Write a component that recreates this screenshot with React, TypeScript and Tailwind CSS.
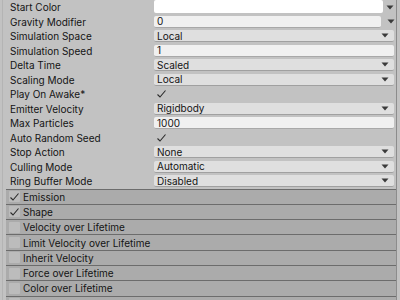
import React from 'react';

type Prop =
  | { label: string; kind: 'color' }
  | { label: string; kind: 'curve'; value: string }
  | { label: string; kind: 'select'; value: string }
  | { label: string; kind: 'text'; value: string }
  | { label: string; kind: 'toggle' };

const props: Prop[] = [
  { label: 'Start Color', kind: 'color' },
  { label: 'Gravity Modifier', kind: 'curve', value: '0' },
  { label: 'Simulation Space', kind: 'select', value: 'Local' },
  { label: 'Simulation Speed', kind: 'text', value: '1' },
  { label: 'Delta Time', kind: 'select', value: 'Scaled' },
  { label: 'Scaling Mode', kind: 'select', value: 'Local' },
  { label: 'Play On Awake*', kind: 'toggle' },
  { label: 'Emitter Velocity', kind: 'select', value: 'Rigidbody' },
  { label: 'Max Particles', kind: 'text', value: '1000' },
  { label: 'Auto Random Seed', kind: 'toggle' },
  { label: 'Stop Action', kind: 'select', value: 'None' },
  { label: 'Culling Mode', kind: 'select', value: 'Automatic' },
  { label: 'Ring Buffer Mode', kind: 'select', value: 'Disabled' },
];

// last row is only peeking in at the bottom edge
const modules = [
  { name: 'Emission', on: true },
  { name: 'Shape', on: true },
  { name: 'Velocity over Lifetime', on: false },
  { name: 'Limit Velocity over Lifetime', on: false },
  { name: 'Inherit Velocity', on: false },
  { name: 'Force over Lifetime', on: false },
  { name: 'Color over Lifetime', on: false },
  { name: '', on: false },
];

const Arrow = () => (
  <svg width="8" height="5" viewBox="0 0 8 5" className="shrink-0">
    <path d="M0.5 0.5 H7.5 L4 4.5 Z" fill="#3a3a3a" />
  </svg>
);

const Check = () => (
  <svg width="11" height="10" viewBox="0 0 11 10">
    <path d="M1.5 5.5 L4 8 L9.5 1.5" fill="none" stroke="#2a2a2a" strokeWidth="1.1" />
  </svg>
);

const Value = ({ p }: { p: Prop }) => {
  if (p.kind === 'color') {
    return (
      <div className="flex h-full items-center gap-[3px]">
        <div className="h-[13px] w-[229px] self-start rounded-[2px] bg-white" />
        <Arrow />
      </div>
    );
  }
  if (p.kind === 'curve') {
    return (
      <div className="flex h-full items-center gap-[6px]">
        <div className="flex h-[12px] w-[227px] items-center rounded-[2px] border-b border-[#a8a8a8] bg-[#f0f0f0] pl-[3px]">
          {p.value}
        </div>
        <Arrow />
      </div>
    );
  }
  if (p.kind === 'select') {
    return (
      <div className="flex h-full items-center">
        <div className="flex h-[12px] w-[240px] items-center justify-between rounded-[2px] border-b border-[#a0a0a0] bg-[#dfdfdf] pl-[3px] pr-[5px]">
          <span>{p.value}</span>
          <Arrow />
        </div>
      </div>
    );
  }
  if (p.kind === 'text') {
    return (
      <div className="flex h-full items-center">
        <div className="flex h-[12px] w-[240px] items-center rounded-[2px] border-b border-[#a8a8a8] bg-[#f0f0f0] pl-[3px]">
          {p.value}
        </div>
      </div>
    );
  }
  return (
    <div className="flex h-full items-center pl-[2px]">
      <Check />
    </div>
  );
};

export default function App() {
  return (
    <div className="relative h-[300px] w-[400px] overflow-hidden bg-[#c2c2c2] font-['Inter','Liberation_Sans',sans-serif] text-[10px] leading-none text-[#141414]">
      <div className="absolute left-[2px] top-0 h-full w-px bg-[#b4b4b4]" />
      <div className="h-full w-[397px] border-r border-[#8c8c8c]">
        <div className="flex flex-col">
          {props.map((p) => (
            <div key={p.label} className="flex h-[14.5px] items-center">
              <div className="w-[154px] shrink-0 pl-[10px]">{p.label}</div>
              <div className="h-full flex-1">
                <Value p={p} />
              </div>
            </div>
          ))}
        </div>
        <div className="ml-[6px] flex flex-col">
          {modules.map((m, i) => (
            <div
              key={i}
              className="flex h-[15.3px] items-center gap-[3px] border-t border-[#6c6c6c] bg-[#ababab] pl-[3px]"
            >
              <div className="flex h-[11px] w-[11px] items-center justify-center rounded-[1px] bg-[#bcbcbc]">
                {m.on && <Check />}
              </div>
              {m.name && <span>{m.name}</span>}
            </div>
          ))}
        </div>
      </div>
    </div>
  );
}
